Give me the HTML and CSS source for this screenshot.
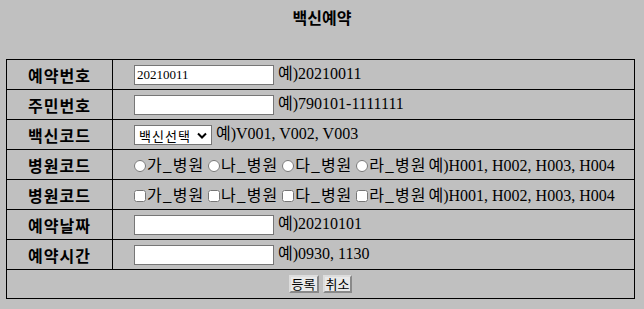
FILE: index.html
```html
<!DOCTYPE html>
<html lang="ko">
<head>
  <meta charset="UTF-8">
  <title>백신예약</title>
  <link rel="stylesheet" href="styles.css">
</head>
<body>

  <div class="header">백신예약</div>

  <form class="reserve">
    <table>
      <tr>
        <th>예약번호</th>
        <td><input type="text" class="field" value="20210011"> 예)20210011</td>
      </tr>
      <tr>
        <th>주민번호</th>
        <td><input type="text" class="field"> 예)790101-1111111</td>
      </tr>
      <tr>
        <th>백신코드</th>
        <td>
          <span class="pick-wrap">
            <select class="pick">
              <option>백신선택</option>
              <option>V001</option>
              <option>V002</option>
              <option>V003</option>
            </select>
            <svg class="chev" width="10" height="7" viewBox="0 0 10 7"><path d="M1 1.5 L5 5.5 L9 1.5" fill="none" stroke="#000" stroke-width="2"/></svg>
          </span> 예)V001, V002, V003
        </td>
      </tr>
      <tr>
        <th>병원코드</th>
        <td class="choices">
          <label><input type="radio" name="hosp" class="mark">가_병원</label>
          <label><input type="radio" name="hosp" class="mark">나_병원</label>
          <label><input type="radio" name="hosp" class="mark">다_병원</label>
          <label><input type="radio" name="hosp" class="mark">라_병원</label>
          <span>예)H001, H002, H003, H004</span>
        </td>
      </tr>
      <tr>
        <th>병원코드</th>
        <td class="choices">
          <label><input type="checkbox" class="mark">가_병원</label>
          <label><input type="checkbox" class="mark">나_병원</label>
          <label><input type="checkbox" class="mark">다_병원</label>
          <label><input type="checkbox" class="mark">라_병원</label>
          <span>예)H001, H002, H003, H004</span>
        </td>
      </tr>
      <tr>
        <th>예약날짜</th>
        <td><input type="text" class="field"> 예)20210101</td>
      </tr>
      <tr>
        <th>예약시간</th>
        <td><input type="text" class="field"> 예)0930, 1130</td>
      </tr>
      <tr class="btn-row">
        <td colspan="2">
          <button type="button" class="btn">등록</button>
          <button type="button" class="btn">취소</button>
        </td>
      </tr>
    </table>
  </form>

</body>
</html>
```

FILE: styles.css
```css
body {
  margin: 0;
  padding: 0 6px;
  background-color: #C0C0C0;
  font-family: "Liberation Serif", "Noto Sans CJK KR", serif;
  font-size: 16px;
  color: #000;
}
.header {
  font-family: "Noto Sans CJK KR", sans-serif;
  font-size: 16px;
  font-weight: bold;
  text-align: center;
  line-height: 20px;
  padding-top: 7px;
  height: 52px;
}
table {
  width: 629px;
  border-collapse: collapse;
  border: 1px solid #000;
}
th, td {
  border: 1px solid #000;
  height: 29px;
  padding: 0;
  line-height: 20px;
}
th {
  width: 105px;
  font-family: "Noto Sans CJK KR", sans-serif;
  font-size: 16px;
  font-weight: bold;
  letter-spacing: 1px;
  text-align: center;
}
td {
  padding-left: 21px;
  white-space: nowrap;
}
.field {
  width: 134px;
  height: 16px;
  margin: 0;
  padding: 1px 2px;
  border: 1px solid #767676;
  font-family: "Liberation Serif", serif;
  font-size: 13px;
  vertical-align: middle;
}
.pick-wrap {
  position: relative;
  display: inline-block;
  vertical-align: middle;
  line-height: 0;
}
.pick {
  appearance: none;
  width: 78px;
  height: 20px;
  margin: 0;
  padding: 0 0 0 4px;
  border: 1px solid #767676;
  border-radius: 0;
  background: #fff;
  font-family: "Noto Sans CJK KR", sans-serif;
  font-size: 13px;
  letter-spacing: 1px;
}
.chev {
  position: absolute;
  right: 5px;
  top: 7px;
}
.choices label {
  font-family: "Noto Sans CJK KR", sans-serif;
  font-size: 16px;
  letter-spacing: 1px;
}
.choices span {
  margin-left: -2px;
}
.mark {
  width: 12px;
  height: 12px;
  margin: 0 1px 0 0;
  vertical-align: -1px;
}
.btn-row td {
  text-align: center;
  padding: 0;
  height: 28px;
}
.btn {
  height: 18px;
  padding: 0 1px;
  font-family: "Noto Sans CJK KR", sans-serif;
  font-size: 13px;
  line-height: 14px;
  background: #E9E9E9;
  border: 2px outset #DDD;
  border-radius: 0;
}
```
